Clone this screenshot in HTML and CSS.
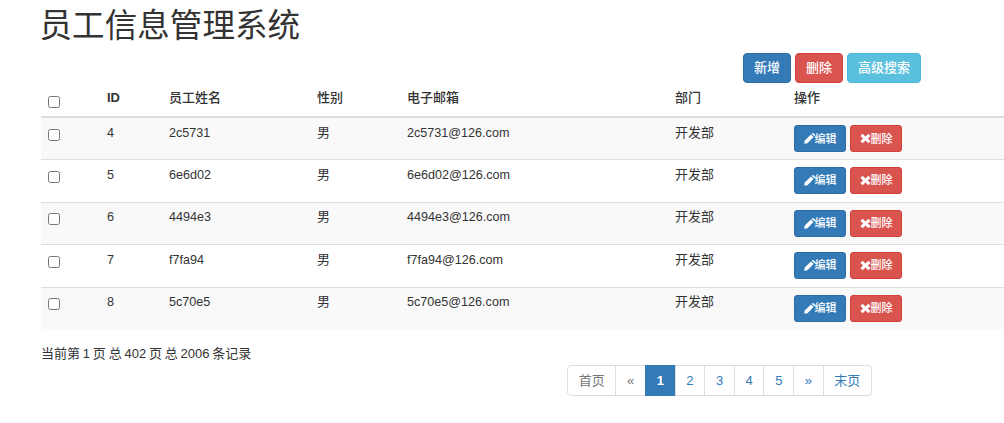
FILE: index.html
```html
<!DOCTYPE html>
<html lang="zh-CN">
<head>
<meta charset="utf-8">
<title>员工信息管理系统</title>
<link rel="stylesheet" href="styles.css">
</head>
<body>
<svg class="defs" width="0" height="0" aria-hidden="true">
  <symbol id="pencil" viewBox="0 0 12 12"><path d="M0.2 11.8 L0.8 8.2 L7.6 1.6 L10.4 4.4 L3.8 11.2 Z M8.4 0.9 L9.2 0.2 C9.6 -0.1 10 -0.1 10.3 0.2 L11.8 1.7 C12.1 2 12.1 2.4 11.8 2.8 L11.1 3.6 Z" fill="currentColor"/></symbol>
  <symbol id="cross" viewBox="0 0 12 12"><path d="M2.9 0.9 L6 3.9 L9.1 0.9 L11.6 3.3 L8.5 6 L11.6 8.7 L9.1 11.1 L6 8.1 L2.9 11.1 L0.4 8.7 L3.5 6 L0.4 3.3 Z" fill="currentColor"/></symbol>
</svg>
<main class="page">
  <h1 class="title">员工信息管理系统</h1>
  <div class="toolbar">
    <button class="btn primary">新增</button>
    <button class="btn danger">删除</button>
    <button class="btn info">高级搜索</button>
  </div>
  <table class="grid">
    <colgroup>
      <col class="c-check"><col class="c-id"><col class="c-name"><col class="c-sex"><col class="c-mail"><col class="c-dept"><col class="c-ops">
    </colgroup>
    <thead>
      <tr><th><input type="checkbox" class="chk"></th><th class="strong">ID</th><th>员工姓名</th><th>性别</th><th>电子邮箱</th><th>部门</th><th>操作</th></tr>
    </thead>
    <tbody>
      <tr><td><input type="checkbox" class="chk"></td><td class="lat">4</td><td class="lat">2c5731</td><td>男</td><td class="lat">2c5731@126.com</td><td>开发部</td><td class="ops"><button class="btn sm primary"><svg class="ico"><use href="#pencil"/></svg>编辑</button><button class="btn sm danger"><svg class="ico"><use href="#cross"/></svg>删除</button></td></tr>
      <tr><td><input type="checkbox" class="chk"></td><td class="lat">5</td><td class="lat">6e6d02</td><td>男</td><td class="lat">6e6d02@126.com</td><td>开发部</td><td class="ops"><button class="btn sm primary"><svg class="ico"><use href="#pencil"/></svg>编辑</button><button class="btn sm danger"><svg class="ico"><use href="#cross"/></svg>删除</button></td></tr>
      <tr><td><input type="checkbox" class="chk"></td><td class="lat">6</td><td class="lat">4494e3</td><td>男</td><td class="lat">4494e3@126.com</td><td>开发部</td><td class="ops"><button class="btn sm primary"><svg class="ico"><use href="#pencil"/></svg>编辑</button><button class="btn sm danger"><svg class="ico"><use href="#cross"/></svg>删除</button></td></tr>
      <tr><td><input type="checkbox" class="chk"></td><td class="lat">7</td><td class="lat">f7fa94</td><td>男</td><td class="lat">f7fa94@126.com</td><td>开发部</td><td class="ops"><button class="btn sm primary"><svg class="ico"><use href="#pencil"/></svg>编辑</button><button class="btn sm danger"><svg class="ico"><use href="#cross"/></svg>删除</button></td></tr>
      <tr><td><input type="checkbox" class="chk"></td><td class="lat">8</td><td class="lat">5c70e5</td><td>男</td><td class="lat">5c70e5@126.com</td><td>开发部</td><td class="ops"><button class="btn sm primary"><svg class="ico"><use href="#pencil"/></svg>编辑</button><button class="btn sm danger"><svg class="ico"><use href="#cross"/></svg>删除</button></td></tr>
    </tbody>
  </table>
  <p class="info-text">当前第 1 页 总 402 页 总 2006 条记录</p>
  <nav class="pager">
    <a class="muted">首页</a><a class="muted">«</a><a class="active">1</a><a>2</a><a>3</a><a>4</a><a>5</a><a>»</a><a>末页</a>
  </nav>
</main>
</body>
</html>
```
FILE: styles.css
```css
* { box-sizing: border-box; }
html, body { margin: 0; padding: 0; }
body {
  font-family: "Liberation Sans", "Noto Sans CJK SC", sans-serif;
  font-size: 13px;
  line-height: 18px;
  color: #333;
  background: #fff;
  overflow: hidden;
  height: 423px;
}
.defs { position: absolute; }
.page { padding-left: 41px; }
.title {
  margin: 0 0 0 -1.5px;
  height: 53px;
  font-size: 32.6px;
  line-height: 52px;
  font-weight: 400;
  color: #333;
}
.toolbar {
  display: flex;
  justify-content: flex-end;
  gap: 4px;
  padding-right: 83px;
}
.btn {
  font: inherit;
  font-weight: 500;
  color: #fff;
  border: 1px solid transparent;
  border-radius: 4px;
  padding: 5px 10px;
  height: 30px;
  line-height: 18px;
  white-space: nowrap;
}
.primary { background: #337ab7; border-color: #2e6da4; }
.danger { background: #d9534f; border-color: #d43f3a; }
.info { background: #5bc0de; border-color: #46b8da; }
.btn.sm {
  display: inline-flex;
  align-items: center;
  justify-content: center;
  width: 52px;
  height: 27px;
  padding: 0;
  font-size: 11px;
  line-height: 16px;
  border-radius: 3px;
}
.ico { width: 11px; height: 11px; flex: none; }
.grid {
  width: 963px;
  table-layout: fixed;
  border-collapse: collapse;
}
.c-check { width: 58px; }
.c-id { width: 62px; }
.c-name { width: 148px; }
.c-sex { width: 90px; }
.c-mail { width: 268px; }
.c-dept { width: 119px; }
.grid th {
  padding: 3px 8px 9px;
  text-align: left;
  vertical-align: bottom;
  font-weight: 500;
  height: 34px;
  border-bottom: 2px solid #ddd;
}
.grid th.strong { font-weight: 700; }
.grid td {
  padding: 6px 8px;
  height: 42px;
  vertical-align: top;
  border-top: 1px solid #ddd;
}
.grid tbody tr:nth-child(even) td { height: 43px; }
.grid tbody tr:nth-child(odd):not(:first-child) td { padding-top: 5.5px; }
.grid .lat { font-size: 12.6px; }
.grid thead + tbody tr:first-child td { border-top: 0; }
.grid tbody tr:nth-child(odd) { background: #f9f9f9; }
.grid tbody tr td.ops,
.grid tbody tr:nth-child(odd):not(:first-child) td.ops { padding: 7px 8px 0; }
.ops .btn + .btn { margin-left: 4px; }
.chk { margin: 5px 0 0 -1px; width: 12px; height: 12px; display: block; }
th .chk { margin: 0 0 -1px -1px; }
.info-text { margin: 16px 0 0; word-spacing: -0.8px; }
.pager {
  display: flex;
  width: max-content;
  margin: 2px 0 0 526px;
}
.pager a {
  padding: 6px 10.7px;
  margin-left: -1px;
  line-height: 17px;
  height: 31px;
  color: #337ab7;
  background: #fff;
  border: 1px solid #ddd;
}
.pager a:first-child { margin-left: 0; border-radius: 4px 0 0 4px; }
.pager a:last-child { border-radius: 0 4px 4px 0; }
.pager a.muted { color: #777; }
.pager a.active { color: #fff; background: #337ab7; border-color: #337ab7; font-weight: 700; }
```
